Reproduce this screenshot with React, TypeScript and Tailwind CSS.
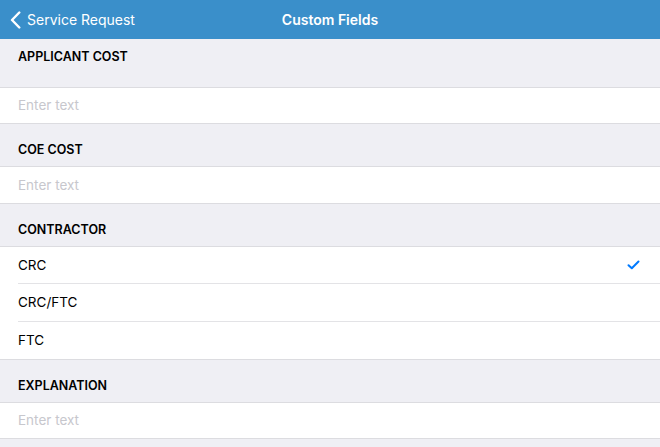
const font = { fontFamily: 'Inter, "Liberation Sans", sans-serif' };

function SectionLabel({ text, tall }: { text: string; tall?: boolean }) {
  return tall ? (
    <div className="h-[48px] bg-[#efeff4] px-[18px] pt-[9px] text-[12.5px] font-semibold text-black">
      {text}
    </div>
  ) : (
    <div className="h-[42px] bg-[#efeff4] px-[18px] flex items-end pb-[6px] text-[12.5px] font-semibold text-black">
      {text}
    </div>
  );
}

function TextInput({ h = 'h-[37px]' }: { h?: string }) {
  return (
    <div className={`${h} bg-white border-y border-[#dcdce0] px-[18px] flex items-center text-[13.5px] text-[#c7c7cd]`}>
      Enter text
    </div>
  );
}

const options = [
  { label: 'CRC', checked: true, h: 'h-[37px]' },
  { label: 'CRC/FTC', checked: false, h: 'h-[38px]' },
  { label: 'FTC', checked: false, h: 'h-[37px]' },
];

export default function App() {
  return (
    <div className="w-[660px] h-[447px] overflow-hidden bg-[#efeff4]" style={font}>
      {/* Nav bar */}
      <div className="h-[39px] bg-[#3a8fca] relative flex items-center text-white">
        <div className="flex items-center pl-[10px]">
          <svg width="11" height="18" viewBox="0 0 11 18" fill="none">
            <path d="M9.3 1.5 L2 9 L9.3 16.5" stroke="white" strokeWidth="2.4" strokeLinecap="round" strokeLinejoin="round" />
          </svg>
          <span className="text-[14px] ml-[6px]">Service Request</span>
        </div>
        <div className="absolute left-0 right-0 text-center text-[14px] font-semibold pointer-events-none">
          Custom Fields
        </div>
      </div>

      <SectionLabel text="APPLICANT COST" tall />
      <TextInput />

      <SectionLabel text="COE COST" />
      <TextInput h="h-[38px]" />

      <SectionLabel text="CONTRACTOR" />
      <div className="bg-white border-y border-[#dcdce0]">
        {options.map((o, i) => (
          <div key={o.label} className="pl-[18px]">
            <div
              className={`${o.h} pr-[20px] flex items-center justify-between text-[13.5px] text-black ${
                i < options.length - 1 ? 'border-b border-[#e3e3e6]' : ''
              }`}
            >
              <span>{o.label}</span>
              {o.checked && (
                <svg width="13" height="10" viewBox="0 0 13 10" fill="none">
                  <path d="M1.5 5.2 L4.8 8.3 L11.5 1.5" stroke="#007aff" strokeWidth="2" strokeLinecap="round" strokeLinejoin="round" />
                </svg>
              )}
            </div>
          </div>
        ))}
      </div>

      <SectionLabel text="EXPLANATION" />
      <TextInput />
    </div>
  );
}
